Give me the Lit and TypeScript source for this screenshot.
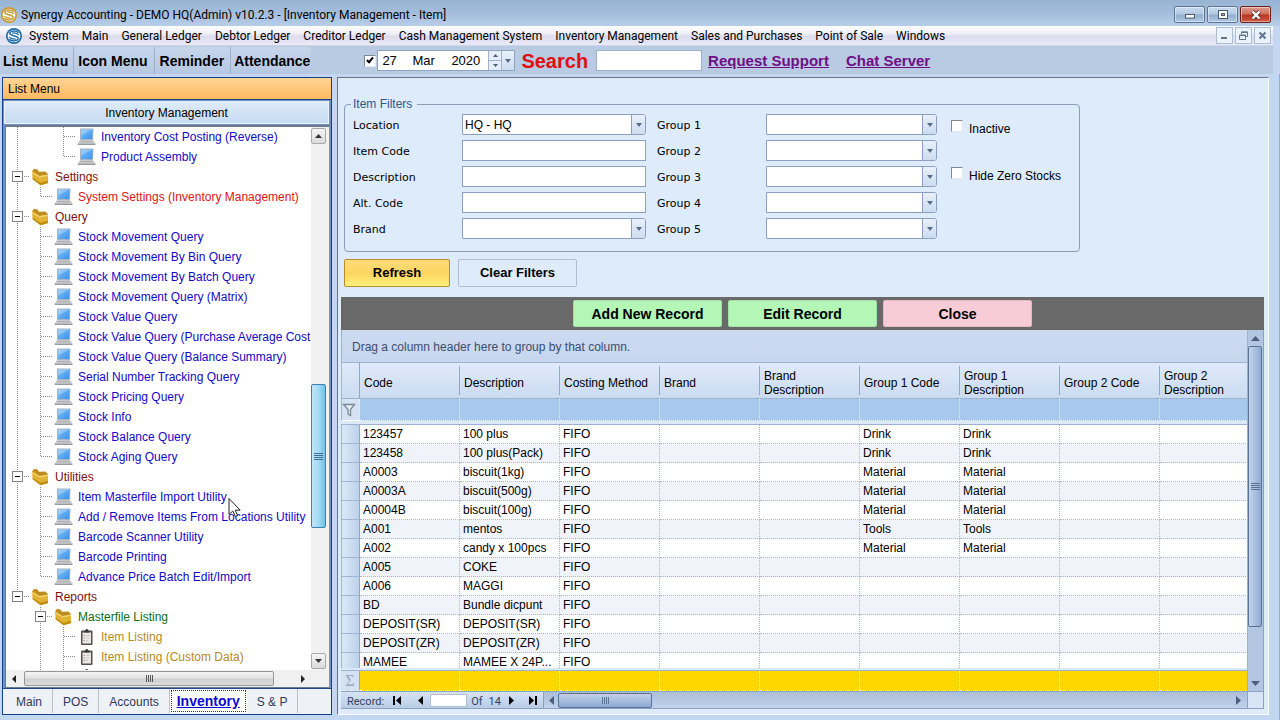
import { LitElement, html, css, svg, nothing } from "lit";
import { customElement } from "lit/decorators.js";
import { classMap } from "lit/directives/class-map.js";

type Guide = "v" | "t" | "l" | "box" | "boxend" | "boxsub" | "";
type Icon = "pc" | "folder" | "clip";
interface Node { g: Guide[]; icon: Icon; text: string; tone: string; }

const leaf = (text: string, last = false): Node => ({ g: ["v", last ? "l" : "t"], icon: "pc", text, tone: "blue" });

const TREE: Node[] = [
  { g: ["v", "", "t"], icon: "pc", text: "Inventory Cost Posting (Reverse)", tone: "blue" },
  { g: ["v", "", "l"], icon: "pc", text: "Product Assembly", tone: "blue" },
  { g: ["box"], icon: "folder", text: "Settings", tone: "maroon" },
  { g: ["v", "l"], icon: "pc", text: "System Settings (Inventory Management)", tone: "red" },
  { g: ["box"], icon: "folder", text: "Query", tone: "maroon" },
  leaf("Stock Movement Query"),
  leaf("Stock Movement By Bin Query"),
  leaf("Stock Movement By Batch Query"),
  leaf("Stock Movement Query (Matrix)"),
  leaf("Stock Value Query"),
  leaf("Stock Value Query (Purchase Average Cost"),
  leaf("Stock Value Query (Balance Summary)"),
  leaf("Serial Number Tracking Query"),
  leaf("Stock Pricing Query"),
  leaf("Stock Info"),
  leaf("Stock Balance Query"),
  leaf("Stock Aging Query", true),
  { g: ["box"], icon: "folder", text: "Utilities", tone: "maroon" },
  leaf("Item Masterfile Import Utility"),
  leaf("Add / Remove Items From Locations Utility"),
  leaf("Barcode Scanner Utility"),
  leaf("Barcode Printing"),
  leaf("Advance Price Batch Edit/Import", true),
  { g: ["boxend"], icon: "folder", text: "Reports", tone: "maroon" },
  { g: ["", "boxsub"], icon: "folder", text: "Masterfile Listing", tone: "green" },
  { g: ["", "v", "t"], icon: "clip", text: "Item Listing", tone: "gold" },
  { g: ["", "v", "t"], icon: "clip", text: "Item Listing (Custom Data)", tone: "gold" },
  { g: ["", "v", "t"], icon: "clip", text: "", tone: "gold" },
];

const COLUMNS = ["Code", "Description", "Costing Method", "Brand", "Brand Description", "Group 1 Code", "Group 1 Description", "Group 2 Code", "Group 2 Description"];

const ITEMS: [string, string, string][] = [
  ["123457", "100 plus", "Drink"],
  ["123458", "100 plus(Pack)", "Drink"],
  ["A0003", "biscuit(1kg)", "Material"],
  ["A0003A", "biscuit(500g)", "Material"],
  ["A0004B", "biscuit(100g)", "Material"],
  ["A001", "mentos", "Tools"],
  ["A002", "candy x 100pcs", "Material"],
  ["A005", "COKE", ""],
  ["A006", "MAGGI", ""],
  ["BD", "Bundle dicpunt", ""],
  ["DEPOSIT(SR)", "DEPOSIT(SR)", ""],
  ["DEPOSIT(ZR)", "DEPOSIT(ZR)", ""],
  ["MAMEE", "MAMEE X 24P...", ""],
];

const MENUS = ["System", "Main", "General Ledger", "Debtor Ledger", "Creditor Ledger", "Cash Management System", "Inventory Management", "Sales and Purchases", "Point of Sale", "Windows"];

const logo = (ring: string) => html`<svg class="logo" width="16" height="16" viewBox="0 0 16 16" aria-hidden="true">
  <circle cx="8" cy="8" r="8" fill=${ring}/><circle cx="8" cy="8" r="6.3" fill="#fff"/>
  <path d="M12.6 4.6C10 2.6 5.400 2.400 4 4.600C3 6.600 5.500 7 8 7.800C10.500 8.600 13 9.200 12 11.200C10.700 13.400 6 13.400 3.400 11.400" fill="none" stroke=${ring} stroke-width="1.500"/>
  <path d="M13 6.800C11 5.600 8 4.600 6.200 5.200M3 9.200C5 10.400 8 11.400 9.800 10.800" fill="none" stroke=${ring} stroke-width="1.300"/>
</svg>`;

const ICONS = {
  pc: html`<svg width="19" height="18" viewBox="0 0 19 18" aria-hidden="true">
    <defs><linearGradient id="scr" x1="0" y1="0" x2="1" y2="1"><stop offset="0" stop-color="#8cc4f6"/><stop offset=".5" stop-color="#5aa9f4"/><stop offset="1" stop-color="#3f93ee"/></linearGradient></defs>
    <path d="M3 .500H16.500L16 12H3Z" fill="#a9b4c0"/><path d="M4 1.500H15.600L15.200 11H4Z" fill="url(#scr)"/>
    <path d="M4 1.500H15.600L4 7.500Z" fill="#bfe0ff" opacity=".4"/>
    <path d="M3 12H16L18.500 15.500H.700Z" fill="#c9cacc"/><path d="M4 13H15.200L16 14.300H3Z" fill="#aeb0b3"/>
    <path d="M.700 15.500H18.500V17H.700Z" fill="#97999c"/></svg>`,
  folder: html`<svg width="19" height="18" viewBox="0 0 19 18" aria-hidden="true">
    <path d="M1 3.500L3 .800L6.500 1.500L8 3.800L14.500 3.600L17 6V15L9.500 17Z" fill="#c2931f"/>
    <path d="M3.500 1.800L6 2.200L7.500 4.600L14 4.500L16 6.500L9 8Z" fill="#b98b20"/>
    <path d="M1 3.500L8.500 8L17 6.500V15L9.500 17.200L1.700 11.300Z" fill="#e2b233"/>
    <path d="M1 3.500L8.500 8L17 6.500V8L8.600 9.600L1.100 5.200Z" fill="#f3d271"/>
    <path d="M1.600 9.500L9.200 14.800L17 12.800V15L9.500 17.200L1.700 11.300Z" fill="#c08e12"/></svg>`,
  clip: html`<svg width="19" height="18" viewBox="0 0 19 18" aria-hidden="true">
    <rect x="4" y="2.500" width="11.500" height="14.500" rx="1" fill="#55504e"/>
    <rect x="5.500" y="4.500" width="8.500" height="11" fill="#ece9ea"/>
    <path d="M7.500 4.500V2.500H8.500L9 1H10.500L11 2.500H12V4.500Z" fill="#3b3836"/>
    <path d="M6.500 7.500H8M6.500 10H8M6.500 12.500H8" stroke="#c08a80"/><path d="M9 7.500H13M9 10H12.500M9 12.500H11" stroke="#c9c9cc"/></svg>`,
};

const guide = (g: Guide) => html`<svg class="guide" width="23" height="20" viewBox="0 0 23 20" aria-hidden="true">
  ${g && g !== "l" && g !== "boxend" ? svg`<path d="M11.500 0V20" class="dots"/>` : nothing}
  ${g === "l" || g === "boxend" ? svg`<path d="M11.500 0V10" class="dots"/>` : nothing}
  ${g && g !== "v" ? svg`<path d="M12 9.500H24" class="dots"/>` : nothing}
  ${g.startsWith("box") ? svg`<rect x="6.500" y="4.500" width="10" height="10" fill="#fff" stroke="#848484"/><path d="M9 9.500H14" stroke="#000"/>` : nothing}
</svg>`;

@customElement("app-root")
export class AppRoot extends LitElement {
  static styles = css`
    :host { display: flex; flex-direction: column; height: 100vh; overflow: hidden; box-sizing: border-box;
      font: 12px/16px "Liberation Sans", Arial, sans-serif; color: #000; background: #c3d7f3; position: relative; }
    *, *::before, *::after { box-sizing: border-box; }
    button, input, select { font: inherit; color: inherit; margin: 0; padding: 0; border: 0; background: none; border-radius: 0; outline: 0; }
    svg { display: block; flex: none; }
    button { cursor: default; white-space: nowrap; }
    .titlebar { flex: none; height: 26px; display: flex; align-items: center; padding: 3px 9px 0 1px; gap: 4px;
      background: linear-gradient(#98b3d3, #a4bddb 50%, #b7cee9); }
    .titlebar h1 { flex: 1; margin: 0; font: 400 12px/16px "Roboto", sans-serif; }
    .win { width: 31px; height: 17px; border: 1px solid #5d7696; border-radius: 2px; display: grid; place-items: center;
      background: linear-gradient(#c9daee, #b2c8e2 48%, #93aecd 52%, #afc8e4); box-shadow: inset 0 0 0 1px rgba(255,255,255,.45); }
    .win.close { border-color: #6b1f19; background: linear-gradient(#dd9c90, #cd6d5c 48%, #b93420 52%, #cc5a41); }
    .wins { display: flex; gap: 2px; }

    .menubar { flex: none; height: 19px; display: flex; align-items: center; gap: 13px; padding: 0 2px 0 6px; font: 12px/16px "Roboto", sans-serif;
      background: linear-gradient(#fff, #eef0f8 40%, #dcdcee 55%, #eae9f7); margin-right: 7px; }
    .menubar .logo { margin-right: -6px; }
    .menubar button { line-height: 16px; }
    .mdi { margin-left: auto; display: flex; gap: 2px; }
    .mdi button { width: 17px; height: 17px; border: 1px solid #aabdd3; background: #eaf2fb; display: grid; place-items: center; }

    .toolbar { flex: none; height: 29px; display: flex; align-items: center; background: #b9cae3; margin-right: 7px; border-top: 1px solid #ccd6e8; padding-top: 1px; }
    .tools { display: flex; height: 27px; background: linear-gradient(#c6d5ea, #b6c8e1); border-radius: 0 4px 4px 0; }
    .tools button { font-weight: 700; font-size: 14px; padding: 0 4px 0 3px; border-right: 1px solid #9db0cc; }
    .tools button:first-child { padding-right: 5px; }
    .tools button:nth-child(2) { padding: 0 6px 0 4px; }
    .tools button:nth-child(3) { padding: 0 6px 0 5px; }
    .tools button:last-child { border: 0; padding-right: 1px; }
    .date { display: flex; align-items: center; margin-left: 53px; }
    .check { appearance: none; flex: none; width: 12px; height: 12px; background: #fff; border: 1px solid #808890; border-right-color: #e4e8ee; border-bottom-color: #e4e8ee; display: grid; place-items: center; }
    .check:checked::after { content: ""; width: 4px; height: 7px; border: solid #000; border-width: 0 2px 2px 0; transform: translateY(-1px) rotate(40deg); }
    .datebox { display: flex; height: 21px; border: 1px solid #8fa3c2; background: #fff; margin-left: 1px; font-size: 13px; padding-left: 4px; }
    .datebox input { width: 30px; }
    .datebox .mon { width: 39px; }
    .datebox .yr { width: 37px; }
    .spin { width: 13px; display: flex; flex-direction: column; border-left: 1px solid #9fb2cc; }
    .spin button { flex: 1; display: grid; place-items: center; background: #e4edf8; }
    .spin button + button { border-top: 1px solid #9fb2cc; }
    .drop { width: 13px; display: grid; place-items: center; border-left: 1px solid #9fb2cc; background: linear-gradient(#e9f1fb, #ccdcf0); }
    .search { display: flex; align-items: center; margin-left: 6px; gap: 8px; color: #e01010; font: 700 20px/24px "Liberation Sans", Arial, sans-serif; }
    .search input { width: 106px; height: 21px; background: #fff; border: 1px solid #9db0cb; font: 13px "Liberation Sans", Arial, sans-serif; color: #000; }
    .toolbar a { color: #6f0f86; font-weight: 700; font-size: 15px; margin-left: 6px; }
    .toolbar a + a { margin-left: 17px; }

    .body { flex: 1; min-height: 0; display: flex; gap: 5px; padding: 3px 10px 5px 2px; border-right: 1px solid #5fc3ea; }
    .side { flex: none; width: 330px; display: flex; flex-direction: column; border: 1px solid #173f8c; background: #6f92c4; }
    .side h2 { flex: none; margin: 0; height: 22px; font-size: 12px; line-height: 23px; font-weight: 400; padding-left: 5px; background: linear-gradient(#ffd596, #fdb95f); border-bottom: 1px solid #173f8c; }
    .side h3 { flex: none; margin: 1px 2px 1px 1px; height: 23px; font-size: 12px; line-height: 25px; font-weight: 400; text-align: center; background: linear-gradient(#dfebf9, #c7dbf3); border: 1px solid #eef5fd; border-top: 0; }
    .tree { flex: 1; min-height: 0; display: grid; grid-template: minmax(0, 1fr) 17px / minmax(0, 1fr) 18px; background: #f0f0f0; margin: 0 2px; border: 1px solid #6d7a8c; border-width: 2px 0 1px 1px; }
    .rows { margin: 0; padding: 0; list-style: none; background: #fff; overflow: hidden; }
    .rows li { display: flex; height: 20px; align-items: center; white-space: nowrap; }
    .rows li span { margin-left: 5px; }
    .guide + svg:not(.guide) { margin-left: 2px; width: 19px; }
    .dots { stroke: #8a8a8a; stroke-dasharray: 1 1; fill: none; }
    .blue { color: #1408c8; } .maroon { color: #80100c; } .red { color: #e01414; } .green { color: #0c6e14; } .gold { color: #b98a20; }
    .vs { display: flex; flex-direction: column; align-items: flex-start; background: #f1f1f1; padding: 1px 0; }
    .vs button { width: 15px; height: 16px; border: 1px solid #a9a9a9; border-radius: 2px; background: linear-gradient(#f6f6f6, #dadada); display: grid; place-items: center; }
    .vs .track { flex: 1; width: 15px; display: flex; flex-direction: column; }
    .vs .before { flex: 242; } .vs .after { flex: 126; }
    .vs .thumb { flex: 143; border: 1px solid #3c7fb1; border-radius: 2px; background: linear-gradient(90deg, #c2e6f7, #a5dbf4 50%, #6fc0e8); display: grid; place-items: center; }
    .hs { display: flex; align-items: center; padding: 0 6px; gap: 8px; }
    .hs .track { flex: 1; margin-right: 19px; height: 15px; border: 1px solid #979797; border-radius: 2px; background: linear-gradient(#f4f4f4, #e4e4e4 45%, #cfcfcf 55%, #dcdcdc); display: grid; place-items: center; }
    .tabs { flex: none; height: 26px; display: flex; background: #eef1f6; color: #2c3a58; border-top: 1px solid #24478f; padding: 0 0 1px; }
    .tabs button { padding: 2px 10px 0; border-right: 1px solid #b9c2d0; }
    .tabs button:first-child { padding-left: 13px; }
    .tabs button.on { background: #fff; color: #0a0ad0; font-weight: 700; font-size: 14px; text-decoration: underline; padding: 0 7px; outline: 1px dotted #0a2fd0; outline-offset: -2px; border: 0; }

    .main { flex: 1; min-width: 0; display: flex; flex-direction: column; background: #deebfb; border: 1px solid; border-color: #6b7480 #fff #fff #6b7480; padding: 17px 4px 5px 3px; }
    fieldset { align-self: flex-start; margin: 0 0 0 3px; border: 1px solid #8c9db8; border-radius: 4px; width: 736px; max-width: 100%; min-height: 155px; padding: 1px 8px 12px; min-width: 0; }
    legend { color: #34558f; padding: 0 5px 0 2px; margin: 0 0 0 -2px; line-height: 18px; }
    .fields { display: grid; grid-template-columns: 98px 184px 98px 171px 1fr; grid-auto-rows: 21px; gap: 5px 11px; }
    .fields > label { font: 11px/23px "DejaVu Sans", Verdana, sans-serif; }
    .fields input[type="text"] { background: #fff; border: 1px solid #8ba0c0; padding: 0 2px; }
    .pick { display: grid; grid-template: 1fr / minmax(0, 1fr) 14px; border: 1px solid #8ba0c0; border-radius: 0 3px 3px 0; background: #fff; }
    .pick select { appearance: none; grid-area: 1 / 1 / 2 / 3; padding: 0 18px 0 2px; width: 100%; height: 19px; font-size: 12px; }
    .pick i { grid-area: 1 / 2; border-left: 1px solid #8ba0c0; background: linear-gradient(#e9f1fb, #ccdcf0); border-radius: 0 2px 2px 0; display: grid; place-items: center; pointer-events: none; z-index: 1; }
    .flags { grid-area: 1 / 5 / 6 / 6; display: flex; flex-direction: column; gap: 31px; padding: 6px 0 0 3px; }
    .flags label { display: flex; align-items: flex-start; gap: 6px; line-height: 18px; height: 16px; }
    .actions { display: flex; gap: 8px; margin: 7px 0 10px 3px; }
    .actions button { height: 28px; width: 119px; border: 1px solid #aebdd3; border-radius: 2px; font-weight: 700; font-size: 13px; background: #deebfa; }
    .actions button.hot { width: 106px; border-color: #b98d2c; background: linear-gradient(#fedb7c, #fdd55f 50%, #fff07c); }

    .bar { flex: none; height: 33px; background: #696969; display: flex; justify-content: center; align-items: center; gap: 6px; }
    .bar button { width: 149px; height: 27px; border-radius: 2px; border: 1px solid #9fe0a4; background: #b3f6b6; font-weight: 700; font-size: 14px; }
    .bar button.shut { background: #f8ccd6; border-color: #e3b8c2; }
    .grid { flex: 1; min-height: 0; display: grid; grid-template: minmax(0, 1fr) 17px / minmax(0, 1fr) 16px; border: 1px solid #8ba2c4; border-width: 0 1px 1px 0; background: #d5e3f5; }
    .sheet { display: flex; flex-direction: column; min-height: 0; }
    .hint { flex: none; height: 33px; line-height: 34px; padding-left: 10px; background: linear-gradient(#cddbf0, #c5d6ee); color: #3c4d6e; border-bottom: 1px solid #9db2d0; border-left: 1px solid #9db2d0; }
    .view { flex: 1; min-height: 0; overflow: hidden; }
    table { table-layout: fixed; border-collapse: separate; border-spacing: 0; width: 919px; }
    td, th { padding: 0; font-weight: 400; text-align: left; }
    .ind { width: 19px; border-right: 1px solid #8fa6c6; border-bottom: 1px solid #9fb4d2; border-left: 1px solid #9fb4d2; background: linear-gradient(90deg, #dce8f8, #c4d6ed); }
    thead .head th { height: 36px; background: linear-gradient(#dfeafa, #cbdbf0); border-bottom: 1px solid #9db2d0; line-height: 14px; }
    thead .head th div { height: 29px; display: flex; align-items: center; padding: 4px 4px 0; border-right: 1px solid #93a8c6; }
    .filter td { height: 22px; background: #a6c9ed; border-right: 1px dotted #e5f0fb; border-bottom: 1px dotted #fff; }
    .filter .ind { background: #d5e2f3; border-bottom-style: solid; }
    .split td { height: 4px; background: #dce9f9; border-bottom: 1px solid #9db2d0; }
    tbody td { height: 19px; line-height: 16px; padding: 0 0 1px 3px; border-right: 1px dotted #aab6cb; border-bottom: 1px dotted #aab6cb; background: #fff; white-space: nowrap; }
    tbody tr:nth-child(even) td { background: #f0f4fa; }
    tbody .ind, tbody tr:nth-child(even) .ind { background: linear-gradient(90deg, #dce8f8, #bdd1ea); padding: 0; border-right: 1px solid #8fa6c6; border-bottom: 1px solid #9fb4d2; }
    .sum { flex: none; height: 23px; border-top: 2px solid #dce9f9; overflow: hidden; }
    .sum div { display: flex; width: 919px; height: 21px; border-top: 1px solid #9db2d0; }
    .sum span { width: 100px; background: #ffd700; border-right: 1px dotted #fff; border-bottom: 1px dotted #fff; }
    .sum .sig { width: 19px; background: #d5e2f3; color: #9aa6b8; font: 16px/20px "Liberation Serif", serif; text-align: center; border-right: 1px solid #8fa6c6; }
    .gv { display: flex; flex-direction: column; background: #b3c6e1; border-left: 1px solid #9db2d0; }
    .gv button { height: 16px; display: grid; place-items: center; }
    .gv .thumb { flex: 282; width: 14px; border: 1px solid #5a7297; border-radius: 2px; background: linear-gradient(90deg, #c3d4ec, #8fabd1); display: grid; place-items: center; }
    .gv .after { flex: 48; }
    .nav { display: flex; align-items: center; background: linear-gradient(#a9bfdd, #c0d2ea); border-top: 1px solid #8ba2c4; color: #33435f; }
    .rec { display: flex; align-items: center; width: 203px; height: 16px; padding-left: 6px; font: 11px/13px "Roboto", sans-serif; background: linear-gradient(#d6e3f5, #b9cce6); border-right: 1px solid #8ba2c4; }
    .rec label, .rec span { padding-top: 3px; }
    .rec button { width: 20px; height: 16px; display: grid; place-items: center; }
    .rec .first { width: 26px; }
    .rec .next { width: 22px; }
    .rec input { width: 37px; height: 13px; background: #fff; border: 1px solid #aebfd8; margin-right: 4px; }
    .rec .of { margin-right: 6px; }
    .gh { flex: 1; display: flex; align-items: center; }
    .gh button { width: 14px; height: 16px; display: grid; place-items: center; }
    .gh .thumb { width: 94px; height: 15px; border: 1px solid #5a7297; border-radius: 2px; background: linear-gradient(#bed0e9, #8fabd1); display: grid; place-items: center; }
    .gh button:last-child { margin-left: auto; margin-right: 2px; }
    .corner { background: #d8e5f6; border: 1px solid #8ba2c4; border-width: 1px 0 0 1px; }
    .cursor { position: absolute; left: 228px; top: 497px; }
  `;

  private tri(d: string, w: number, h: number, fill = "#4d5f7c") {
    return html`<svg width=${w} height=${h} viewBox="0 0 ${w} ${h}" aria-hidden="true"><path d=${d} fill=${fill}/></svg>`;
  }
  private down(fill = "#5a6b85") { return this.tri("M0 0H6L3 4Z", 6, 4, fill); }
  private grip(vertical: boolean, color: string) {
    return html`<svg width="9" height="9" viewBox="0 0 9 9" aria-hidden="true"><path d=${vertical ? "M0 1.500H9M0 3.500H9M0 5.500H9M0 7.500H9" : "M1.500 1V8M3.500 1V8M5.500 1V8M7.500 1V8"} stroke=${color}/></svg>`;
  }
  private pick(id: string, value = "") {
    return html`<span class="pick"><select id=${id}><option>${value}</option></select><i>${this.down()}</i></span>`;
  }
  private field(i: number, label: string, combo: boolean, value = "") {
    return html`<label for="f${i}">${label}</label>
      ${combo ? this.pick(`f${i}`, value) : html`<input type="text" id="f${i}">`}
      <label for="g${i}">Group ${i}</label>${this.pick(`g${i}`)}`;
  }

  render() {
    return html`
      <header class="titlebar">
        ${logo("#c79a2c")}<h1>Synergy Accounting - DEMO HQ(Admin) v10.2.3 - [Inventory Management - Item]</h1>
        <div class="wins">
          <button class="win" aria-label="Minimize"><svg width="12" height="8"><rect x="1.500" y="3.500" width="9" height="3.500" fill="#fff" stroke="#4b5b70"/></svg></button>
          <button class="win" aria-label="Maximize"><svg width="12" height="10"><rect x="1.500" y=".500" width="9" height="8" fill="#fff" stroke="#4b5b70"/><rect x="4.500" y="3.500" width="3" height="2" fill="#9ab" stroke="#4b5b70"/></svg></button>
          <button class="win close" aria-label="Close window"><svg width="12" height="10"><path d="M2.500 1.500L9.500 8.500M9.500 1.500L2.500 8.500" stroke="#5a3a3a" stroke-width="4"/><path d="M2.500 1.500L9.500 8.500M9.500 1.500L2.500 8.500" stroke="#fff" stroke-width="2.400"/></svg></button>
        </div>
      </header>
      <nav class="menubar">
        ${logo("#1f6ea8")}${MENUS.map((m) => html`<button>${m}</button>`)}
        <div class="mdi">
          <button aria-label="Minimize child"><svg width="9" height="9"><path d="M1 7H7" stroke="#5f7591" stroke-width="2"/></svg></button>
          <button aria-label="Restore child"><svg width="9" height="9"><path d="M2.500 3V.800H8.500V5.500H6.500M2.500 1.500H8.500M.500 4H6.500V8.500H.500ZM.500 4.500H6.500" fill="none" stroke="#5f7591"/></svg></button>
          <button aria-label="Close child"><svg width="9" height="9"><path d="M1.500 1.500L7.500 7.500M7.500 1.500L1.500 7.500" stroke="#5f7591" stroke-width="2"/></svg></button>
        </div>
      </nav>
      <div class="toolbar">
        <div class="tools"><button>List Menu</button><button>Icon Menu</button><button>Reminder</button><button>Attendance</button></div>
        <div class="date">
          <input class="check" type="checkbox" checked aria-label="Use date">
          <div class="datebox">
            <input aria-label="Day" value="27"><input class="mon" aria-label="Month" value="Mar"><input class="yr" aria-label="Year" value="2020">
            <div class="spin"><button aria-label="Later">${this.tri("M0 3L2.500 0L5 3Z", 5, 3)}</button><button aria-label="Earlier">${this.tri("M0 0H5L2.500 3Z", 5, 3)}</button></div>
            <button class="drop" aria-label="Open calendar">${this.down()}</button>
          </div>
        </div>
        <label class="search">Search<input type="text"></label>
        <a href="#support">Request Support</a><a href="#chat">Chat Server</a>
      </div>
      <div class="body">
        <aside class="side">
          <h2>List Menu</h2>
          <h3>Inventory Management</h3>
          <div class="tree">
            <ul class="rows">${TREE.map((n) => html`<li class=${n.tone}>${n.g.map(guide)}${ICONS[n.icon]}<span>${n.text}</span></li>`)}</ul>
            <div class="vs">
              <button aria-label="Scroll up">${this.tri("M0 4L3.500 0L7 4Z", 7, 4, "#333")}</button>
              <div class="track"><div class="before"></div><div class="thumb">${this.grip(true, "#3d6e90")}</div><div class="after"></div></div>
              <button aria-label="Scroll down">${this.tri("M0 0H7L3.500 4Z", 7, 4, "#333")}</button>
            </div>
            <div class="hs">${this.tri("M4 0V8L0 4Z", 4, 8, "#222")}<div class="track">${this.grip(false, "#555")}</div>${this.tri("M0 0V8L4 4Z", 4, 8, "#222")}</div>
          </div>
          <div class="tabs">${["Main", "POS", "Accounts", "Inventory", "S & P"].map((t) => html`<button class=${classMap({ on: t === "Inventory" })}>${t}</button>`)}</div>
        </aside>
        <main class="main">
          <fieldset>
            <legend>Item Filters</legend>
            <div class="fields">
              ${this.field(1, "Location", true, "HQ - HQ")}${this.field(2, "Item Code", false)}${this.field(3, "Description", false)}${this.field(4, "Alt. Code", false)}${this.field(5, "Brand", true)}
              <div class="flags">
                <label><input class="check" type="checkbox">Inactive</label>
                <label><input class="check" type="checkbox">Hide Zero Stocks</label>
              </div>
            </div>
          </fieldset>
          <div class="actions"><button class="hot">Refresh</button><button>Clear Filters</button></div>
          <div class="bar"><button>Add New Record</button><button>Edit Record</button><button class="shut">Close</button></div>
          <section class="grid">
            <div class="sheet">
              <div class="hint">Drag a column header here to group by that column.</div>
              <div class="view"><table>
                <thead>
                  <tr class="head"><th class="ind"></th>${COLUMNS.map((c) => html`<th><div>${c}</div></th>`)}</tr>
                  <tr class="filter"><td class="ind"><svg width="16" height="14" viewBox="0 0 16 14" aria-hidden="true"><path d="M1.500 1.500H12.500L8.500 6.500V12.500L6 11V6.500Z" fill="#e6ecf5" stroke="#7a8798" stroke-width="1.300"/></svg></td>${COLUMNS.map(() => html`<td></td>`)}</tr>
                  <tr class="split"><td colspan="10"></td></tr>
                </thead>
                <tbody>${ITEMS.map(([code, desc, grp]) => html`<tr><td class="ind"></td><td>${code}</td><td>${desc}</td><td>FIFO</td><td></td><td></td><td>${grp}</td><td>${grp}</td><td></td><td></td></tr>`)}</tbody>
              </table></div>
              <div class="sum"><div><span class="sig">Σ</span>${COLUMNS.map(() => html`<span></span>`)}</div></div>
            </div>
            <div class="gv">
              <button aria-label="Grid up">${this.tri("M0 5L4.500 0L9 5Z", 9, 5)}</button>
              <div class="thumb">${this.grip(true, "#5d7394")}</div><div class="after"></div>
              <button aria-label="Grid down">${this.tri("M0 0H9L4.500 5Z", 9, 5)}</button>
            </div>
            <div class="nav">
              <div class="rec">
                <label for="recno">Record:</label>
                <button class="first" aria-label="First record">${this.tri("M0 0H2V9H0ZM8 0V9L3 4.500Z", 8, 9, "#000")}</button>
                <button aria-label="Previous record">${this.tri("M5 0V9L0 4.500Z", 5, 9, "#000")}</button>
                <input id="recno" type="text">
                <span class="of">Of</span><span>14</span>
                <button class="next" aria-label="Next record">${this.tri("M0 0V9L5 4.500Z", 5, 9, "#000")}</button>
                <button aria-label="Last record">${this.tri("M0 0V9L5 4.500ZM6 0H8V9H6Z", 8, 9, "#000")}</button>
              </div>
              <div class="gh"><button aria-label="Grid left">${this.tri("M5 0V9L0 4.500Z", 5, 9)}</button><div class="thumb">${this.grip(false, "#5d7394")}</div><button aria-label="Grid right">${this.tri("M0 0V9L5 4.500Z", 5, 9)}</button></div>
            </div>
            <div class="corner"></div>
          </section>
        </main>
      </div>
      <svg class="cursor" width="14" height="22" viewBox="0 0 14 22" aria-hidden="true"><path d="M1 1.500V17.500L4.800 14L7.300 19.500L9.600 18.500L7.200 13.200H12.200Z" fill="#fff" stroke="#222"/></svg>
    `;
  }
}
